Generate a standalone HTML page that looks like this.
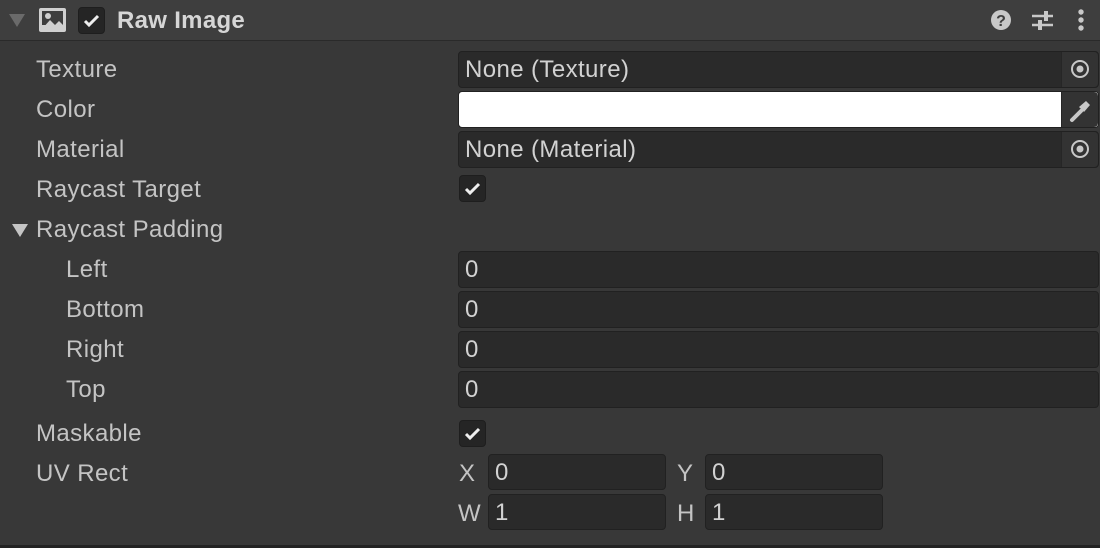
<!DOCTYPE html>
<html><head><style>
body{margin:0;width:1100px;height:548px;background:#383838;font-family:"Liberation Sans",sans-serif;color:#c4c4c4;overflow:hidden;position:relative}
.hdr{position:absolute;left:0;top:0;width:1100px;height:40px;background:#3e3e3e;border-bottom:1px solid #2a2a2a}
.lbl{position:absolute;font-size:24px;line-height:26px;letter-spacing:0.4px}
.f{position:absolute;background:#2a2a2a;border:1px solid #212121;border-radius:4px;box-sizing:border-box;font-size:24px;letter-spacing:0.4px;color:#d2d2d2;line-height:35px;padding-left:6px}
.btn{position:absolute;right:0;top:0;bottom:0;width:36px;background:#333;border-left:1px solid #262626;border-radius:0 4px 4px 0}
.cb{position:absolute;width:27px;height:27px;background:#252525;border:1px solid #1e1e1e;border-radius:4px;box-sizing:border-box}
</style></head><body>
<div class="hdr"></div>
<svg style="position:absolute;left:8px;top:12px" width="18" height="16"><path d="M1 2H17L9 15Z" fill="#6a6a6a"/></svg>
<svg style="position:absolute;left:39px;top:7px" width="28" height="26"><rect x="0" y="1" width="27" height="24" rx="2" fill="#d0d0d0"/><rect x="3" y="4" width="21" height="14" fill="#3e3e3e"/><circle cx="9" cy="9" r="3" fill="#d0d0d0"/><path d="M3 22L11 13L16 18L20 14L24 18V22Z" fill="#d0d0d0"/></svg>
<div class="cb" style="left:78px;top:7px"><svg width="25" height="25"><path d="M6 13L10 17L19 8" stroke="#eee" stroke-width="3" fill="none"/></svg></div>
<div class="lbl" style="left:117px;top:8px;font-weight:bold;font-size:24px;letter-spacing:0.3px;color:#d6d6d6">Raw Image</div>
<svg style="position:absolute;left:990px;top:9px" width="22" height="22"><circle cx="11" cy="11" r="10" fill="#c8c8c8"/><text x="11" y="17" font-size="16" font-weight="bold" text-anchor="middle" fill="#3e3e3e" font-family="Liberation Sans">?</text></svg>
<svg style="position:absolute;left:1031px;top:8px" width="24" height="24"><path d="M1 8H22M1 17H22" stroke="#c8c8c8" stroke-width="2.5"/><rect x="13" y="3" width="4" height="10" fill="#c8c8c8"/><rect x="7" y="12" width="4" height="10" fill="#c8c8c8"/></svg>
<svg style="position:absolute;left:1076px;top:8px" width="10" height="24"><circle cx="5" cy="4" r="2.7" fill="#c8c8c8"/><circle cx="5" cy="12" r="2.7" fill="#c8c8c8"/><circle cx="5" cy="20" r="2.7" fill="#c8c8c8"/></svg>

<div class="lbl" style="left:36px;top:57px">Texture</div>
<div class="lbl" style="left:36px;top:97px">Color</div>
<div class="lbl" style="left:36px;top:137px">Material</div>
<div class="lbl" style="left:36px;top:177px">Raycast Target</div>
<svg style="position:absolute;left:11px;top:222px" width="18" height="16"><path d="M1 2H17L9 15Z" fill="#c4c4c4"/></svg>
<div class="lbl" style="left:36px;top:217px">Raycast Padding</div>
<div class="lbl" style="left:66px;top:257px">Left</div>
<div class="lbl" style="left:66px;top:297px">Bottom</div>
<div class="lbl" style="left:66px;top:337px">Right</div>
<div class="lbl" style="left:66px;top:377px">Top</div>
<div class="lbl" style="left:36px;top:421px">Maskable</div>
<div class="lbl" style="left:36px;top:461px">UV Rect</div>

<div class="f" style="left:458px;top:51px;width:641px;height:37px">None (Texture)<div class="btn"><svg width="36" height="35"><circle cx="18" cy="17" r="8" stroke="#c8c8c8" stroke-width="2" fill="none"/><circle cx="18" cy="17" r="3.5" fill="#c8c8c8"/></svg></div></div>
<div class="f" style="left:458px;top:91px;width:641px;height:37px;background:#fff"><div class="btn"><svg width="36" height="35"><path d="M10 28L19 19" stroke="#c8c8c8" stroke-width="4" stroke-linecap="round"/><path d="M17 15L24 9L28 13L22 20Z" fill="#c8c8c8"/></svg></div></div>
<div class="f" style="left:458px;top:131px;width:641px;height:37px">None (Material)<div class="btn"><svg width="36" height="35"><circle cx="18" cy="17" r="8" stroke="#c8c8c8" stroke-width="2" fill="none"/><circle cx="18" cy="17" r="3.5" fill="#c8c8c8"/></svg></div></div>
<div class="cb" style="left:459px;top:175px"><svg width="25" height="25"><path d="M6 13L10 17L19 8" stroke="#eee" stroke-width="3" fill="none"/></svg></div>
<div class="f" style="left:458px;top:251px;width:641px;height:37px">0</div>
<div class="f" style="left:458px;top:291px;width:641px;height:37px">0</div>
<div class="f" style="left:458px;top:331px;width:641px;height:37px">0</div>
<div class="f" style="left:458px;top:371px;width:641px;height:37px">0</div>
<div class="cb" style="left:459px;top:420px"><svg width="25" height="25"><path d="M6 13L10 17L19 8" stroke="#eee" stroke-width="3" fill="none"/></svg></div>
<div class="lbl" style="left:459px;top:461px">X</div>
<div class="f" style="left:488px;top:454px;width:178px;height:36px;line-height:35px">0</div>
<div class="lbl" style="left:677px;top:461px">Y</div>
<div class="f" style="left:705px;top:454px;width:178px;height:36px;line-height:35px">0</div>
<div class="lbl" style="left:458px;top:501px">W</div>
<div class="f" style="left:488px;top:494px;width:178px;height:36px;line-height:35px">1</div>
<div class="lbl" style="left:677px;top:501px">H</div>
<div class="f" style="left:705px;top:494px;width:178px;height:36px;line-height:35px">1</div>
<div style="position:absolute;left:0;top:545px;width:1100px;height:3px;background:#232323"></div>
</body></html>
